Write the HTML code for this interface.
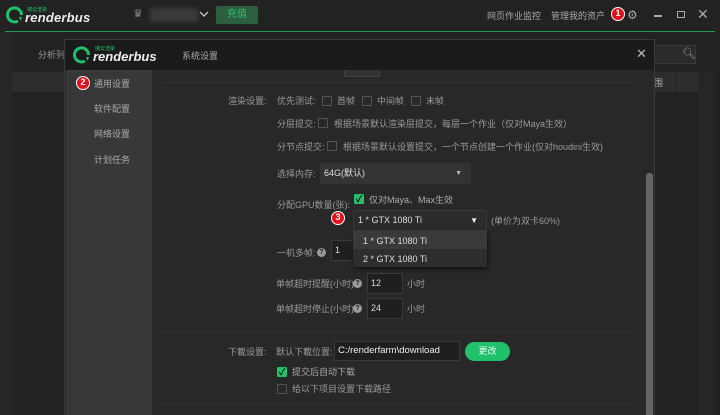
<!DOCTYPE html>
<html><head><meta charset="utf-8"><style>
*{margin:0;padding:0;box-sizing:border-box}
body{width:720px;height:415px;overflow:hidden;background:#222;font-family:"Liberation Sans","Noto Sans CJK SC",sans-serif;font-size:9px;line-height:10px;color:#bbb;position:relative}
.a{position:absolute}
.cb{position:absolute;width:10px;height:10px;border:1px solid #555;border-radius:1px}
.cbg{position:absolute;width:10px;height:10px;background:#1fc16b;border-radius:1px;color:#111;font-size:9px;line-height:10px;text-align:center;font-weight:bold}
.lbl{position:absolute;color:#9a9a9a;font-size:9px;white-space:nowrap}
.inp{position:absolute;background:#1f1f1f;border:1px solid #3a3a3a;color:#ddd;font-size:9px;padding-left:3px}
.q{position:absolute;width:9px;height:9px;border-radius:50%;background:#9a9a9a;color:#222;font-size:7px;line-height:9px;text-align:center;font-weight:bold}
.badge{position:absolute;width:14px;height:14px;border-radius:50%;background:#e0101a;border:1.5px solid #fff;color:#fff;font-size:9px;font-weight:bold;line-height:11px;text-align:center}
</style></head><body>
<!-- top bar -->
<div class="a" style="left:0;top:0;width:720px;height:31px;background:#222"></div>
<div class="a" style="left:5px;top:31px;width:351px;height:1px;background:#1f9c55"></div>
<div class="a" style="left:356px;top:31px;width:359px;height:1px;background:#1f9c55"></div>
<svg class="a" style="left:6px;top:6px" width="18" height="18" viewBox="0 0 18 18"><path d="M12 15 A7 7 0 1 1 15.5 9" fill="none" stroke="#1fc16b" stroke-width="3"/><path d="M13 11 l3 0 l-1.5 4z" fill="#1fc16b"/></svg>
<div class="a" style="left:27px;top:5px;font-size:5px;color:#1fc16b">瑞云渲染</div>
<div class="a" style="left:25px;top:10px;font-size:13px;line-height:15px;font-style:italic;font-weight:bold;color:#eee;letter-spacing:0.2px">renderbus</div>
<div class="a" style="left:133px;top:9px;width:14px;height:11px;color:#888;font-size:11px;line-height:11px">♛</div>
<div class="a" style="left:150px;top:8px;width:48px;height:14px;background:#3a3a3a;filter:blur(2px)"></div>
<svg class="a" style="left:199px;top:11px" width="10" height="7"><path d="M1 1 L5 5 L9 1" fill="none" stroke="#bbb" stroke-width="1.5"/></svg>
<div class="a" style="left:216px;top:6px;width:42px;height:18px;background:#2e5e40;border-radius:2px;color:#28c76f;font-size:10px;text-align:center;line-height:18px">充值</div>
<div class="a" style="left:487px;top:11px;color:#aaa;font-size:9px">网页作业监控</div>
<div class="a" style="left:551px;top:11px;color:#aaa;font-size:9px">管理我的资产</div>
<div class="badge" style="left:611px;top:7px">1</div>
<div class="a" style="left:627px;top:9px;color:#aaa;font-size:12px;line-height:12px">⚙</div>
<div class="a" style="left:654px;top:15px;width:8px;height:2px;background:#aaa"></div>
<div class="a" style="left:677px;top:11px;width:8px;height:7px;border:1.5px solid #aaa"></div>
<div class="a" style="left:697px;top:7px;color:#aaa;font-size:14px;line-height:14px">✕</div>
<!-- background app -->
<div class="a" style="left:0;top:32px;width:12px;height:383px;background:#262626"></div>
<div class="a" style="left:38px;top:50px;color:#999;font-size:9px">分析列</div>
<div class="a" style="left:12px;top:72px;width:53px;height:20px;background:#2d2d2d"></div>
<div class="a" style="left:654px;top:72px;width:44px;height:20px;background:#2d2d2d"></div>
<div class="a" style="left:675px;top:72px;width:1px;height:20px;background:#222"></div>
<div class="a" style="left:654px;top:78px;color:#aaa;font-size:9px">围</div>
<div class="a" style="left:700px;top:78px;color:#aaa;font-size:9px">道</div>
<div class="a" style="left:654px;top:45px;width:42px;height:19px;background:#2a2a2a;border:1px solid #3a3a3a;border-left:none"></div>
<div class="a" style="left:682px;top:48px;color:#999;font-size:11px;line-height:12px">🔍︎</div>
<div class="a" style="left:698px;top:72px;width:17px;height:343px;background:#262626"></div>
<!-- dialog -->
<div class="a" style="left:64px;top:39px;width:591px;height:376px;background:#282828;border:1px solid #3a3a3a;border-bottom:none"></div>
<div class="a" style="left:65px;top:40px;width:589px;height:30px;background:#1b1b1b"></div>
<svg class="a" style="left:73px;top:46px" width="18" height="18" viewBox="0 0 18 18"><path d="M12 15 A7 7 0 1 1 15.5 9" fill="none" stroke="#1fc16b" stroke-width="3"/><path d="M13 11 l3 0 l-1.5 4z" fill="#1fc16b"/></svg>
<div class="a" style="left:95px;top:44px;font-size:5px;color:#1fc16b">瑞云渲染</div>
<div class="a" style="left:93px;top:49px;font-size:13px;line-height:15px;font-style:italic;font-weight:bold;color:#eee">renderbus</div>
<div class="a" style="left:182px;top:51px;color:#aaa;font-size:9px">系统设置</div>
<div class="a" style="left:636px;top:47px;color:#bbb;font-size:13px;line-height:13px">✕</div>
<!-- sidebar -->
<div class="a" style="left:66px;top:70px;width:86px;height:345px;background:#383838"></div>
<div class="badge" style="left:76px;top:76px">2</div>
<div class="a" style="left:94px;top:79px;color:#aaa;font-size:9px">通用设置</div>
<div class="a" style="left:94px;top:104px;color:#aaa;font-size:9px">软件配置</div>
<div class="a" style="left:94px;top:129px;color:#aaa;font-size:9px">网络设置</div>
<div class="a" style="left:94px;top:155px;color:#aaa;font-size:9px">计划任务</div>
<!-- content -->
<div class="a" style="left:344px;top:70px;width:36px;height:7px;background:#333;border:1px solid #444;border-top:none"></div>
<div class="a" style="left:163px;top:82px;width:470px;height:1px;background:#333"></div>
<div class="lbl" style="left:228px;top:96px">渲染设置:</div>
<div class="lbl" style="left:277px;top:96px">优先测试:</div>
<div class="cb" style="left:322px;top:96px"></div><div class="lbl" style="left:337px;top:96px">首帧</div>
<div class="cb" style="left:362px;top:96px"></div><div class="lbl" style="left:377px;top:96px">中间帧</div>
<div class="cb" style="left:411px;top:96px"></div><div class="lbl" style="left:426px;top:96px">末帧</div>
<div class="lbl" style="left:277px;top:119px">分层提交:</div>
<div class="cb" style="left:318px;top:118px"></div><div class="lbl" style="left:334px;top:119px">根据场景默认渲染层提交，每层一个作业（仅对Maya生效）</div>
<div class="lbl" style="left:277px;top:142px">分节点提交:</div>
<div class="cb" style="left:327px;top:141px"></div><div class="lbl" style="left:343px;top:142px">根据场景默认设置提交，一个节点创建一个作业(仅对houdini生效)</div>
<div class="lbl" style="left:277px;top:169px">选择内存:</div>
<div class="a" style="left:320px;top:163px;width:151px;height:21px;background:#333;color:#ddd;font-size:9px;line-height:21px;padding-left:4px">64G(默认)<span style="position:absolute;right:9px;top:0;font-size:7px;color:#bbb">▼</span></div>
<div class="lbl" style="left:277px;top:200px">分配GPU数量(张):</div>
<div class="cbg" style="left:354px;top:194px">✓</div><div class="lbl" style="left:369px;top:195px;color:#aaa">仅对Maya、Max生效</div>
<div class="badge" style="left:331px;top:211px">3</div>
<div class="a" style="left:353px;top:210px;width:134px;height:21px;background:#2b2b2b;border:1px solid #3a3a3a;color:#ddd;font-size:9px;line-height:19px;padding-left:4px">1 * GTX 1080 Ti<span style="position:absolute;right:8px;top:0;font-size:8px;color:#eee">▼</span></div>
<div class="lbl" style="left:491px;top:216px">(单价为双卡60%)</div>
<div class="lbl" style="left:277px;top:248px">一机多帧:</div><div class="q" style="left:317px;top:248px">?</div>
<div class="inp" style="left:331px;top:240px;width:24px;height:21px;line-height:19px">1</div>
<div class="a" style="left:353px;top:231px;width:134px;height:36px;background:#2e2e2e;box-shadow:1px 2px 4px rgba(0,0,0,.6)"></div>
<div class="a" style="left:353px;top:231px;width:134px;height:18px;background:#3a3a3a"></div>
<div class="a" style="left:363px;top:236px;color:#ddd;font-size:9px">1 * GTX 1080 Ti</div>
<div class="a" style="left:363px;top:254px;color:#ddd;font-size:9px">2 * GTX 1080 Ti</div>
<div class="lbl" style="left:276px;top:279px">单帧超时提醒(小时)</div><div class="q" style="left:353px;top:279px">?</div>
<div class="inp" style="left:367px;top:273px;width:36px;height:21px;line-height:19px">12</div><div class="lbl" style="left:407px;top:279px">小时</div>
<div class="lbl" style="left:276px;top:304px">单帧超时停止(小时)</div><div class="q" style="left:353px;top:304px">?</div>
<div class="inp" style="left:367px;top:298px;width:36px;height:21px;line-height:19px">24</div><div class="lbl" style="left:407px;top:304px">小时</div>
<div class="a" style="left:163px;top:332px;width:470px;height:1px;background:#333"></div>
<div class="lbl" style="left:228px;top:347px">下載设置:</div>
<div class="lbl" style="left:276px;top:347px">默认下載位置:</div>
<div class="inp" style="left:334px;top:341px;width:126px;height:20px;line-height:18px;font-size:9.5px;color:#eee">C:/renderfarm\download</div>
<div class="a" style="left:465px;top:342px;width:45px;height:19px;border-radius:10px;background:#1fc16b;color:#e8fff0;font-size:9px;text-align:center;line-height:19px">更改</div>
<div class="cbg" style="left:277px;top:367px">✓</div><div class="lbl" style="left:292px;top:367px;color:#aaa">提交后自动下载</div>
<div class="cb" style="left:277px;top:384px"></div><div class="lbl" style="left:292px;top:384px">给以下项目设置下载路径</div>
<div class="a" style="left:163px;top:404px;width:470px;height:1px;background:#333"></div>
<!-- scrollbar -->
<div class="a" style="left:646px;top:173px;width:7px;height:242px;background:#666;border-radius:3px 3px 0 0"></div>
</body></html>
